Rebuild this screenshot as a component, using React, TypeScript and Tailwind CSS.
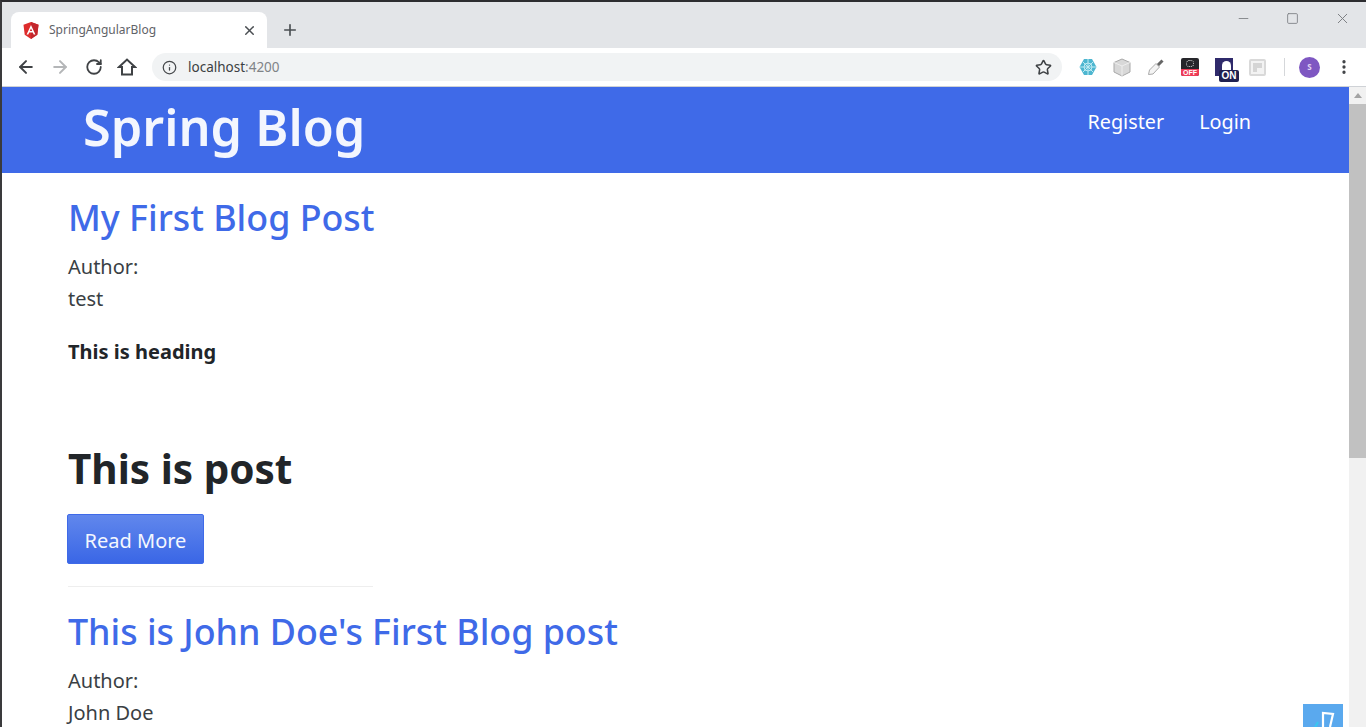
import { ArrowLeft, ArrowRight, RotateCw, Info, Star, X, Plus, Minus, Square, MoreVertical } from "lucide-react";

const font = "font-['Noto_Sans','Open_Sans',sans-serif]";

function AngularIcon() {
  return (
    <svg width="16" height="17" viewBox="0 0 16 17">
      <path d="M8 0 L15.5 2.7 L14.3 12.7 L8 17 L1.7 12.7 L.5 2.7 Z" fill="#dd2c2c" />
      <path d="M8 0 L15.5 2.7 L14.3 12.7 L8 17 Z" fill="#c3262c" />
      <path d="M8 3 L3.6 12.6 H5.3 L6.2 10.4 H9.8 L10.7 12.6 H12.4 Z M8 6.4 L9.2 9 H6.8 Z" fill="#fff" fillRule="evenodd" />
    </svg>
  );
}

function HomeIcon() {
  return (
    <svg className="ml-[14px]" width="20" height="20" viewBox="0 0 20 20" fill="none" stroke="#3f4245" strokeWidth="2">
      <path d="M2 10 L10 2.5 L18 10 H15 V17.5 H5 V10 Z" strokeLinejoin="miter" />
    </svg>
  );
}

function Extensions() {
  return (
    <div className="flex items-center">
      <svg className="ml-[17px]" width="18" height="18" viewBox="0 0 18 18">
        <path d="M5 1 H13 L17.5 9 L13 17 H5 L.5 9 Z" fill="#4db6d0" />
        <path d="M9 1 V17 M1 9 H17 M4 4 L14 14 M14 4 L4 14" stroke="#bfeaf2" strokeWidth="1" />
        <circle cx="9" cy="9" r="4" fill="none" stroke="#bfeaf2" strokeWidth="1" />
      </svg>
      <svg className="ml-[16px]" width="18" height="19" viewBox="0 0 18 19">
        <path d="M9 1 L17 4.5 V14 L9 18 L1 14 V4.5 Z" fill="#d8d8d8" stroke="#a8a8a8" strokeWidth="1" />
        <path d="M9 8 L17 4.5 M9 8 L1 4.5 M9 8 V18" stroke="#eeeeee" strokeWidth="1" fill="none" />
      </svg>
      <svg className="ml-[16px]" width="17" height="17" viewBox="0 0 17 17">
        <path d="M10 7 L15.5 1.5" stroke="#666" strokeWidth="3" />
        <path d="M9 4.5 L12.5 8 L6 15 L1.5 15.5 L2.5 11 Z" fill="#f4f4f4" stroke="#aaa" strokeWidth="1" />
      </svg>
      <div className="ml-[17px] relative h-[18px] w-[18px] overflow-hidden rounded-[2px] bg-[#26262b]">
        <div className="absolute left-[5px] top-[2px] h-[7px] w-[8px] rounded-full border border-dotted border-[#ddd]" />
        <div className="absolute inset-x-0 bottom-0 h-[7px] bg-[#ef3b57] text-center font-['Liberation_Sans',sans-serif] text-[7px] font-bold leading-[7px] text-white">OFF</div>
      </div>
      <div className="ml-[16px] relative h-[18px] w-[18px] bg-[#2f2a6b]">
        <div className="absolute left-[7px] top-[3px] h-[9px] w-[9px] rounded-t-full bg-white" />
        <div className="absolute left-[4px] top-[12px] h-[12px] w-[20px] rounded-[2px] bg-[#1f2050] text-center font-['Liberation_Sans',sans-serif] text-[10px] font-bold leading-[12px] text-white">ON</div>
      </div>
      <div className="ml-[16px] relative h-[17px] w-[17px] rounded-[2px] border-2 border-[#d9d9d9] bg-[#f3f3f3]">
        <div className="absolute left-[2px] top-[2px] h-[5px] w-[9px] bg-[#d5d5d5]" />
        <div className="absolute left-[2px] top-[7px] h-[4px] w-[4px] bg-[#d5d5d5]" />
      </div>
    </div>
  );
}

function Post({ title, author, children }: { title: string; author: string; children?: React.ReactNode }) {
  return (
    <article>
      <h2 className="ml-[1px] h-[48px] whitespace-nowrap text-[35.8px] font-medium leading-[48px] text-[#3f6ae8]">{title}</h2>
      <p className="ml-[1px] mt-[10px] text-[20px] leading-[32px] text-[#3a3f44]">Author:</p>
      <p className="ml-[1px] text-[20px] leading-[32px] text-[#3a3f44]">{author}</p>
      {children}
    </article>
  );
}

export default function App() {
  return (
    <div className={`${font} relative flex h-[727px] w-[1366px] flex-col overflow-hidden border-t-2 border-l-2 border-t-[#2d2d30] border-l-[#3a3a3c] bg-white`}>
      <div className="flex h-[46px] shrink-0 bg-[#e3e5e8]">
        <div className="ml-[9px] mt-[10px] flex h-[36px] w-[256px] items-center rounded-t-[8px] bg-white pl-[12px] pr-[10px]">
          <AngularIcon />
          <span className="ml-[10px] flex-1 text-[12px] text-[#5f6368]">SpringAngularBlog</span>
          <X size={15} strokeWidth={2.4} className="text-[#4a4e52]" />
        </div>
        <Plus size={18} strokeWidth={2.2} className="ml-[14px] mt-[19px] text-[#4a4e52]" />
        <div className="ml-auto flex h-[32px] items-center pr-[15px] text-[#7d8084]">
          <Minus size={15} strokeWidth={1.4} />
          <Square size={13} strokeWidth={1.6} className="ml-[35px]" />
          <X size={17} strokeWidth={1.4} className="ml-[35px]" />
        </div>
      </div>

      <div className="flex h-[39px] shrink-0 items-center border-b border-[#cfd2d6] bg-white">
        <ArrowLeft size={20} strokeWidth={2.4} className="ml-[14px] text-[#3f4245]" />
        <ArrowRight size={20} strokeWidth={2.4} className="ml-[14px] text-[#b4b6b8]" />
        <RotateCw size={18} strokeWidth={2.4} className="ml-[15px] text-[#3f4245]" />
        <HomeIcon />
        <div className="ml-[15px] flex h-[28px] w-[910px] items-center rounded-full bg-[#f1f3f4] px-[10px]">
          <Info size={15} strokeWidth={2} className="text-[#45484b]" />
          <span className="ml-[11px] flex-1 text-[13.5px] text-[#3c3f42]">localhost<span className="text-[#7f8387]">:4200</span></span>
          <Star size={17} strokeWidth={2.2} className="text-[#3f4245]" />
        </div>
        <Extensions />
        <div className="ml-[18px] h-[18px] w-px bg-[#d5d7da]" />
        <div className="ml-[14px] flex h-[21px] w-[21px] items-center justify-center rounded-full bg-[#7e57c2] text-[8px] font-bold text-[#e0d4f2]">S</div>
        <MoreVertical size={18} strokeWidth={2.4} className="ml-[15px] text-[#3f4245]" />
      </div>

      <div className="flex min-h-0 flex-1">
        <main className="min-w-0 flex-1 overflow-hidden">
          <header className="flex h-[86px] items-center bg-[#3f6ae8] text-white">
            <h1 className="ml-[81px] -translate-y-[3px] text-[50.4px] font-semibold leading-[82px] text-[#f3f6fe]">Spring Blog</h1>
            <nav className="ml-auto mr-[98px] flex -translate-y-[8px] gap-[35px] text-[19.8px]">
              <span>Register</span>
              <span>Login</span>
            </nav>
          </header>
          <div className="ml-[65px] mt-[20px] w-[306px]">
            <Post title="My First Blog Post" author="test">
              <p className="ml-[1px] mt-[21px] text-[20px] font-bold leading-[32px] text-[#212529]">This is heading</p>
              <p className="ml-[1px] mt-[71px] text-[40.5px] font-bold leading-[60px] text-[#212529]">This is post</p>
              <button className="mt-[15px] h-[50px] w-[137px] rounded-[2px] border border-[#3f6ae8] bg-gradient-to-b from-[#6187ec] to-[#3a66e6] pt-[3px] text-[20px] text-[#f4f7fe]">Read More</button>
              <hr className="ml-[1px] mt-[22px] border-[#eeeeee]" />
            </Post>
            <div className="mt-[20px]">
              <Post title="This is John Doe's First Blog post" author="John Doe" />
            </div>
          </div>
        </main>
        <aside className="flex w-[17px] shrink-0 flex-col bg-[#f1f1f1]">
          <div className="flex h-[17px] items-center justify-center">
            <div className="h-0 w-0 border-x-[4px] border-b-[5px] border-x-transparent border-b-[#a3a3a3]" />
          </div>
          <div className="h-[354px] bg-[#c1c1c1]" />
        </aside>
      </div>

      <div className="absolute left-[1301px] top-[702px] h-[23px] w-[40px] overflow-hidden bg-[#5aa9ee]">
        <svg width="40" height="23" viewBox="0 0 40 23">
          <path d="M20 23 L20 9 L30 10 L27 23" fill="none" stroke="#fff" strokeWidth="2.2" />
          <path d="M12 23 L15 18" stroke="#39c6f0" strokeWidth="2.2" />
        </svg>
      </div>
    </div>
  );
}
